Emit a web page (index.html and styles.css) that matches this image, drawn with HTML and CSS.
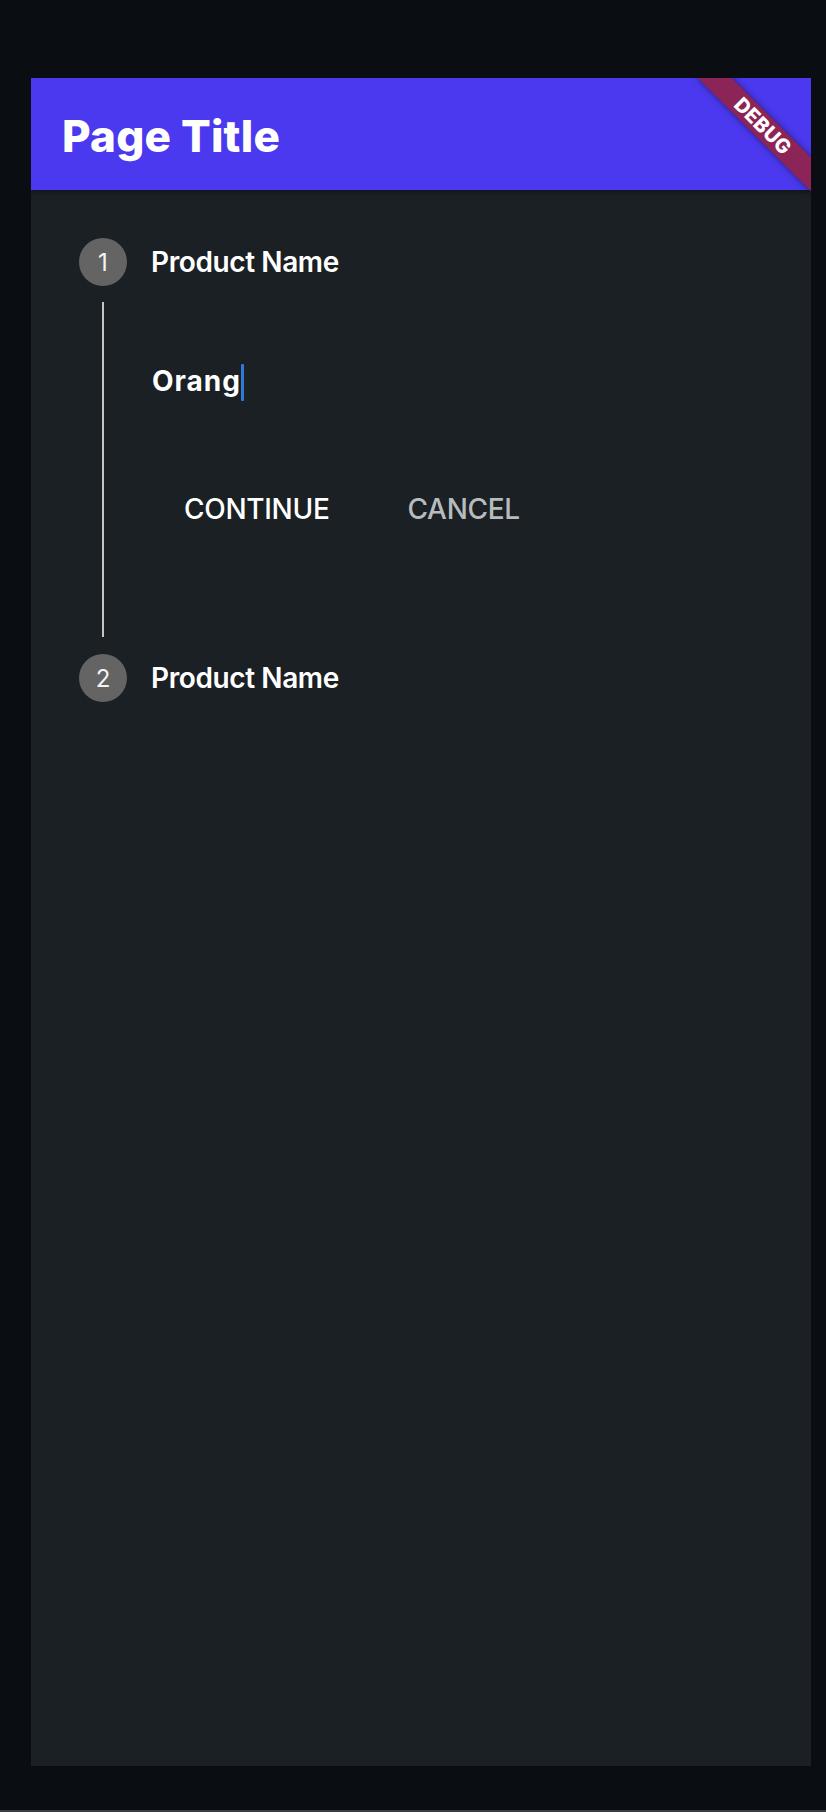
FILE: index.html
```html
<!DOCTYPE html>
<html lang="en">
<head>
<meta charset="utf-8">
<title>Page Title</title>
<link rel="stylesheet" href="styles.css">
</head>
<body>
  <div class="frame">
    <header class="appbar">
      <h1 class="title">Page Title</h1>
    </header>

    <div class="banner-anchor">
      <div class="banner">DEBUG</div>
    </div>

    <main class="stepper">
      <div class="step-header">
        <div class="circle">1</div>
        <div class="step-title">Product Name</div>
      </div>
      <div class="step-content">
        <div class="line"></div>
        <div class="content-body">
          <div class="input-row">
            <span class="input-text">Orang</span><span class="cursor"></span>
          </div>
          <div class="controls">
            <button class="btn btn-continue">CONTINUE</button>
            <button class="btn btn-cancel">CANCEL</button>
          </div>
        </div>
      </div>
      <div class="step-header">
        <div class="circle">2</div>
        <div class="step-title">Product Name</div>
      </div>
    </main>
  </div>
  <div class="bottom-line"></div>
</body>
</html>
```

FILE: styles.css
```css
html, body {
  margin: 0;
  padding: 0;
}

body {
  width: 826px;
  height: 1812px;
  background: #0a0e12;
  overflow: hidden;
  font-family: "Inter", "Liberation Sans", sans-serif;
  display: flex;
  flex-direction: column;
}

.frame {
  position: relative;
  overflow: hidden;
  margin: 78px 0 0 31px;
  width: 780px;
  height: 1688px;
  background: #1b2024;
}

.appbar {
  height: 112px;
  background: #4b39ef;
  display: flex;
  align-items: center;
  padding-left: 31px;
  box-shadow: 0 2px 5px rgba(0, 0, 0, 0.35);
  position: relative;
  z-index: 1;
}

.title {
  margin: 0;
  color: #ffffff;
  font-family: "Inter", "Liberation Sans", sans-serif;
  font-weight: 800;
  font-size: 44px;
  letter-spacing: 0.2px;
  line-height: 1;
  padding-top: 4px;
}

.banner-anchor {
  position: absolute;
  top: 0;
  right: 0;
  width: 0;
  height: 0;
  transform: rotate(45deg);
  z-index: 2;
}

.banner {
  position: absolute;
  left: -80px;
  top: 56px;
  width: 160px;
  height: 24px;
  line-height: 24px;
  background: #8c2458;
  box-shadow: 0 0 6px rgba(0, 0, 0, 0.5);
  color: #ffffff;
  font-family: "Inter", "Liberation Sans", sans-serif;
  font-weight: 800;
  font-size: 20px;
  text-align: center;
  letter-spacing: 0.3px;
}

.stepper {
  padding-top: 48px;
}

.step-header {
  display: flex;
  align-items: center;
  height: 48px;
  padding-left: 48px;
}

.circle {
  width: 48px;
  height: 48px;
  border-radius: 50%;
  background: #646464;
  color: #f4f4f4;
  font-size: 24px;
  display: flex;
  align-items: center;
  justify-content: center;
}

.step-title {
  margin-left: 24px;
  color: #ffffff;
  font-size: 28px;
  font-weight: 600;
  letter-spacing: -0.4px;
}

.step-content {
  display: flex;
  height: 335px;
  margin: 16px 0 17px 0;
}

.line {
  width: 2px;
  margin-left: 71px;
  background: #c4c4c4;
}

.content-body {
  margin-left: 48px;
  padding-top: 59px;
}

.input-row {
  display: flex;
  align-items: flex-start;
  height: 40px;
}

.input-text {
  color: #ffffff;
  font-size: 28px;
  font-weight: 700;
  line-height: 40px;
  letter-spacing: 1px;
}

.cursor {
  width: 3px;
  height: 37px;
  margin-top: 3px;
  background: #2d7bd8;
  border-radius: 1px;
}

.controls {
  display: flex;
  margin-top: 88px;
  margin-left: 16px;
  gap: 46px;
}

.btn {
  background: none;
  border: 0;
  padding: 0 16px;
  font-family: "Inter", "Liberation Sans", sans-serif;
  font-size: 28px;
  font-weight: 500;
  line-height: 40px;
  letter-spacing: -0.3px;
}

.btn-continue {
  color: #ffffff;
}

.btn-cancel {
  color: #b8bbbe;
}

.bottom-line {
  margin-top: auto;
  height: 2px;
  background: #3b3f43;
}
```
